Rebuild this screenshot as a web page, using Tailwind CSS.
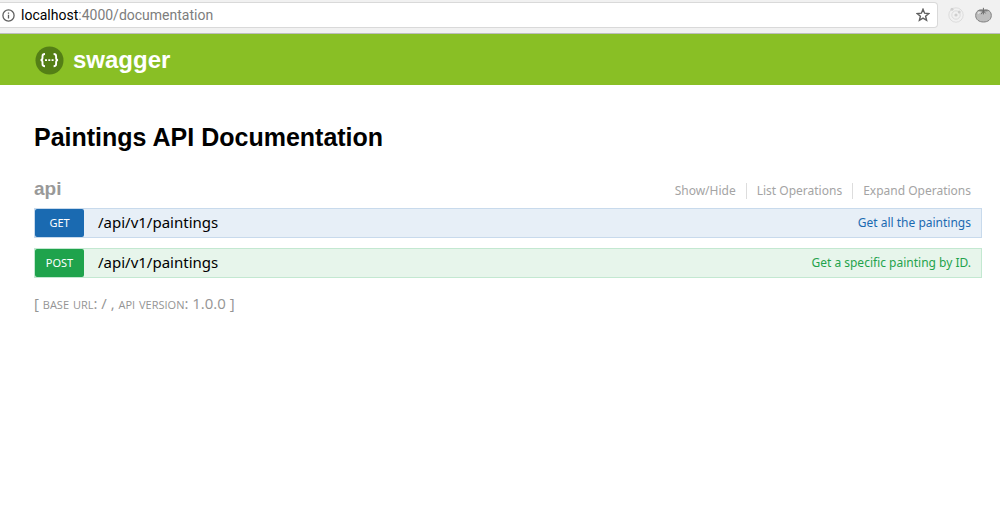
<!DOCTYPE html>
<html lang="en">
<head>
    <meta charset="UTF-8">
    <meta name="viewport" content="width=device-width, initial-scale=1.0">
    <script src="https://cdn.jsdelivr.net/npm/@tailwindcss/browser@4"></script>
    <title>Paintings API Documentation</title>
</head>
<body class="bg-white font-['Noto_Sans','Open_Sans',sans-serif] text-black">
    <!-- Browser toolbar -->
    <div class="flex items-center h-[34px] pb-1 bg-[#f1f1f1] border-b border-[#bdbdbd]">
        <div class="flex flex-1 items-center h-[26px] pl-[2px] pr-[7px] mt-px bg-white border border-l-0 border-[#d9d9d9] rounded-r-[4px] font-[Roboto,sans-serif] text-[14px]">
            <svg class="size-[13px] shrink-0" viewBox="0 0 13 13" fill="none" stroke="#5f5f5f" stroke-width="1.3" aria-hidden="true">
                <circle cx="6.5" cy="6.5" r="5.6"/>
                <path d="M6.5 5.8v3.6M6.5 3.4v1.3"/>
            </svg>
            <label for="address" class="pl-[6px] text-black">localhost</label>
            <input id="address" type="text" value=":4000/documentation" class="flex-1 min-w-0 text-[#7d7d7d] outline-none">
            <button type="button" aria-label="Bookmark this page" class="cursor-pointer">
                <svg class="size-[14px]" viewBox="0 0 14 14" fill="none" stroke="#5f5f5f" stroke-width="1.4" aria-hidden="true">
                    <path d="M7 1.3l1.6 3.9 4.2.3-3.2 2.7 1 4.1L7 10.1l-3.6 2.2 1-4.1L1.2 5.5l4.2-.3z"/>
                </svg>
            </button>
        </div>
        <button type="button" aria-label="Radar extension" class="ml-[10px] cursor-pointer">
            <svg class="size-4" viewBox="0 0 16 16" fill="none" stroke="#dcdcdc" aria-hidden="true">
                <circle cx="8" cy="8" r="7.2"/>
                <circle cx="8" cy="8" r="4.2"/>
                <circle cx="8" cy="8" r="1.6" fill="#cfcfcf" stroke="none"/>
                <circle cx="4" cy="2.3" r="1.5" fill="#cfcfcf" stroke="none"/>
                <circle cx="11.2" cy="5" r="1.5" fill="#cfcfcf" stroke="none"/>
            </svg>
        </button>
        <button type="button" aria-label="Tomato timer extension" class="ml-[11px] mr-2 cursor-pointer">
            <svg class="w-[17px] h-4" viewBox="0 0 17 16" aria-hidden="true">
                <path d="M8.5 3.2C13 1.800 16.300 4.400 16.300 8.500c0 4-3.300 6.500-7.800 6.500S.7 12.500.7 8.500C.7 4.400 4 1.800 8.500 3.200z" fill="#bdbdbd" stroke="#808080"/>
                <path d="M3 6.600c.8-1.300 1.600-1.800 2.600-1.900" fill="none" stroke="#e4e4e4" stroke-width="1.400"/>
                <path d="M8.400.8v6.600M8.400 3.800H4.300M8.400 3.800L6.200 7.200M8.400 3.800l2.200 2.600M8.400 3.800h4.200" fill="none" stroke="#6b6b6b"/>
            </svg>
        </button>
    </div>

    <header class="bg-[#89bf25] px-[34px] py-[10px]">
        <a href="#" class="inline-flex items-center gap-[9px] h-[31px] align-top text-white">
            <svg class="size-[30px]" viewBox="0 0 30 30" fill="none" stroke="#fff" aria-hidden="true">
                <circle cx="15.500" cy="15.500" r="14" fill="#547f16" stroke="none"/>
                <path d="M11 9c-1.900 0-2.500.7-2.500 2.200v1.900c0 1.300-.5 1.900-1.900 2 1.400.1 1.900.7 1.900 2V19c0 1.500.6 2.200 2.500 2.200M19.600 9c1.900 0 2.500.7 2.500 2.200v1.900c0 1.300.5 1.900 1.900 2-1.400.1-1.900.7-1.900 2V19c0 1.500-.6 2.200-2.500 2.200" stroke-width="1.900"/>
                <path d="M11 15.200h2M14.300 15.200h2M17.600 15.200h2" stroke-width="1.800"/>
            </svg>
            <span class="font-['Liberation_Sans',sans-serif] font-bold text-[24px] leading-[30px]">swagger</span>
        </a>
    </header>

    <main class="pl-[34px] pr-[18px] pt-9">
        <h1 class="font-['Liberation_Sans',sans-serif] font-bold text-[25px] leading-[32px]">Paintings API Documentation</h1>

        <section class="mt-[22px]">
            <div class="flex items-center justify-between h-[33px] pb-[2px]">
                <h2 class="font-['Liberation_Sans',sans-serif] font-bold text-[19px] leading-[24px] pb-1 text-[#999]"><a href="#api">api</a></h2>
                <ul class="flex pr-[11px] text-[12px] leading-[16px] text-[#a4a4a4]">
                    <li class="pr-[10px] border-r border-[#ddd]"><a href="#toggle">Show/Hide</a></li>
                    <li class="px-[10px] border-r border-[#ddd]"><a href="#list">List Operations</a></li>
                    <li class="pl-[10px]"><a href="#expand">Expand Operations</a></li>
                </ul>
            </div>

            <ul class="flex flex-col gap-[10px]">
                <li class="flex items-center h-[30px] bg-[#e7eff7] border border-[#c8daec]">
                    <a href="#get" class="w-[49px] rounded-[2px] bg-[#1a6ab1] text-center text-white text-[11px] leading-[28px]">GET</a>
                    <a href="#get" class="pl-[14px] pb-px text-[15px] leading-[27px]">/api/v1/paintings</a>
                    <a href="#get" class="ml-auto pr-[10px] text-[12px] text-[#1a6ab1]">Get all the paintings</a>
                </li>
                <li class="flex items-center h-[30px] bg-[#e7f5eb] border border-[#c3e8d1]">
                    <a href="#post" class="w-[49px] rounded-[2px] bg-[#1fa34c] text-center text-white text-[11px] leading-[28px]">POST</a>
                    <a href="#post" class="pl-[14px] pb-px text-[15px] leading-[27px]">/api/v1/paintings</a>
                    <a href="#post" class="ml-auto pr-[10px] text-[12px] text-[#1fa34c]">Get a specific painting by ID.</a>
                </li>
            </ul>
        </section>

        <footer class="mt-[14px] font-['Open_Sans',sans-serif] text-[15px] leading-[22px] text-[#949494]">
            [ <span class="[font-variant:small-caps]">base url</span>: / , <span class="[font-variant:small-caps]">api version</span>: 1.0.0 ]
        </footer>
    </main>
</body>
</html>
